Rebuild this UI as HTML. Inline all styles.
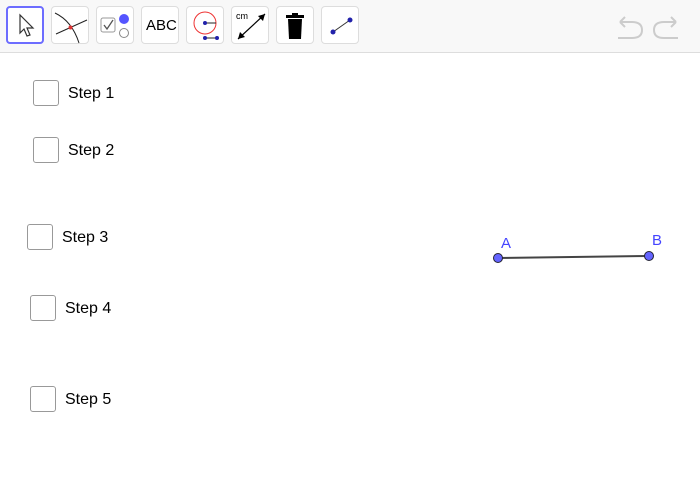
<!DOCTYPE html><html><head><style>
body{margin:0;width:700px;height:500px;background:#fff;font-family:"Liberation Sans",sans-serif;position:relative;overflow:hidden}
.tb{position:absolute;left:0;top:0;width:700px;height:52px;background:#f8f8f8;border-bottom:1px solid #ddd}
.b{position:absolute;top:6px;width:38px;height:38px;border:1px solid #ddd;border-radius:4px;background:#fff;box-sizing:border-box}
.cb{position:absolute;width:26px;height:26px;border:1px solid #999;border-radius:3px;box-sizing:border-box}
.l{position:absolute;font-size:16px;color:#000}
</style></head><body>
<div class="tb">
<div class="b" style="left:6px;border:2px solid #6d6dff"><svg width="34" height="34"><path d="M12 7 L12 25 L16 21 L19 28 L22 27 L19 20 L25 20 Z" fill="#fff" stroke="#333" stroke-width="1.2"/></svg></div>
<div class="b" style="left:51px"><svg width="38" height="38"><path d="M3 6 Q20 14 27 36" fill="none" stroke="#222"/><path d="M4 27 L35 13" stroke="#222"/><circle cx="18.5" cy="20.5" r="2" fill="#d33"/></svg></div>
<div class="b" style="left:96px"><svg width="38" height="38"><rect x="4" y="11" width="14" height="14" rx="2" fill="#fff" stroke="#999"/><path d="M7 18 L10 22 L16 13" fill="none" stroke="#555" stroke-width="1.3"/><circle cx="27" cy="12" r="5" fill="#5555ff"/><circle cx="27" cy="26" r="4.5" fill="#fff" stroke="#888"/></svg></div>
<div class="b" style="left:141px"><div style="position:absolute;left:4px;top:10px;font-size:15px">ABC</div></div>
<div class="b" style="left:186px"><svg width="38" height="38"><circle cx="18" cy="16" r="11" fill="none" stroke="#e33"/><path d="M18 16 L29 16" stroke="#222"/><circle cx="18" cy="16" r="2" fill="#22a"/><path d="M18 31 L30 31" stroke="#222"/><circle cx="18" cy="31" r="2" fill="#22a"/><circle cx="30" cy="31" r="2" fill="#22a"/></svg></div>
<div class="b" style="left:231px"><div style="position:absolute;left:4px;top:4px;font-size:9px">cm</div><svg width="38" height="38"><path d="M6 32 L33 7" stroke="#000" stroke-width="1.2"/><path d="M6 32 l2 -7 l5 5z M33 7 l-7 2 l5 5z" fill="#000"/></svg></div>
<div class="b" style="left:276px"><svg width="38" height="38"><rect x="9" y="8" width="18" height="3" fill="#000"/><rect x="15" y="6" width="6" height="3" fill="#000"/><path d="M11 12 L25 12 L24 32 L12 32 Z" fill="#000"/></svg></div>
<div class="b" style="left:321px"><svg width="38" height="38"><path d="M11 25 L28 13" stroke="#333"/><circle cx="11" cy="25" r="2.5" fill="#22a"/><circle cx="28" cy="13" r="2.5" fill="#22a"/></svg></div>
<svg style="position:absolute;left:612px;top:12px" width="72" height="30"><path d="M8 10 L20 10 Q30 10 30 18 Q30 26 20 26 L6 26 M8 10 L13 5 M8 10 L13 15" fill="none" stroke="#ccc" stroke-width="2"/><path d="M64 10 L52 10 Q42 10 42 18 Q42 26 52 26 L66 26 M64 10 L59 5 M64 10 L59 15" fill="none" stroke="#ccc" stroke-width="2"/></svg>
</div>
<div class="cb" style="left:33px;top:80px"></div><div class="l" style="left:68px;top:85px">Step 1</div>
<div class="cb" style="left:33px;top:137px"></div><div class="l" style="left:68px;top:142px">Step 2</div>
<div class="cb" style="left:27px;top:224px"></div><div class="l" style="left:62px;top:229px">Step 3</div>
<div class="cb" style="left:30px;top:295px"></div><div class="l" style="left:65px;top:300px">Step 4</div>
<div class="cb" style="left:30px;top:386px"></div><div class="l" style="left:65px;top:391px">Step 5</div>
<svg style="position:absolute;left:0;top:0" width="700" height="500"><path d="M498 258 L649 256" stroke="#444" stroke-width="2"/><circle cx="498" cy="258" r="4.5" fill="#6464ff" stroke="#223" stroke-width="1"/><circle cx="649" cy="256" r="4.5" fill="#6464ff" stroke="#223" stroke-width="1"/><text x="501" y="248" fill="#4444ff" font-size="15" font-family="Liberation Sans">A</text><text x="652" y="245" fill="#4444ff" font-size="15" font-family="Liberation Sans">B</text></svg>
</body></html>
